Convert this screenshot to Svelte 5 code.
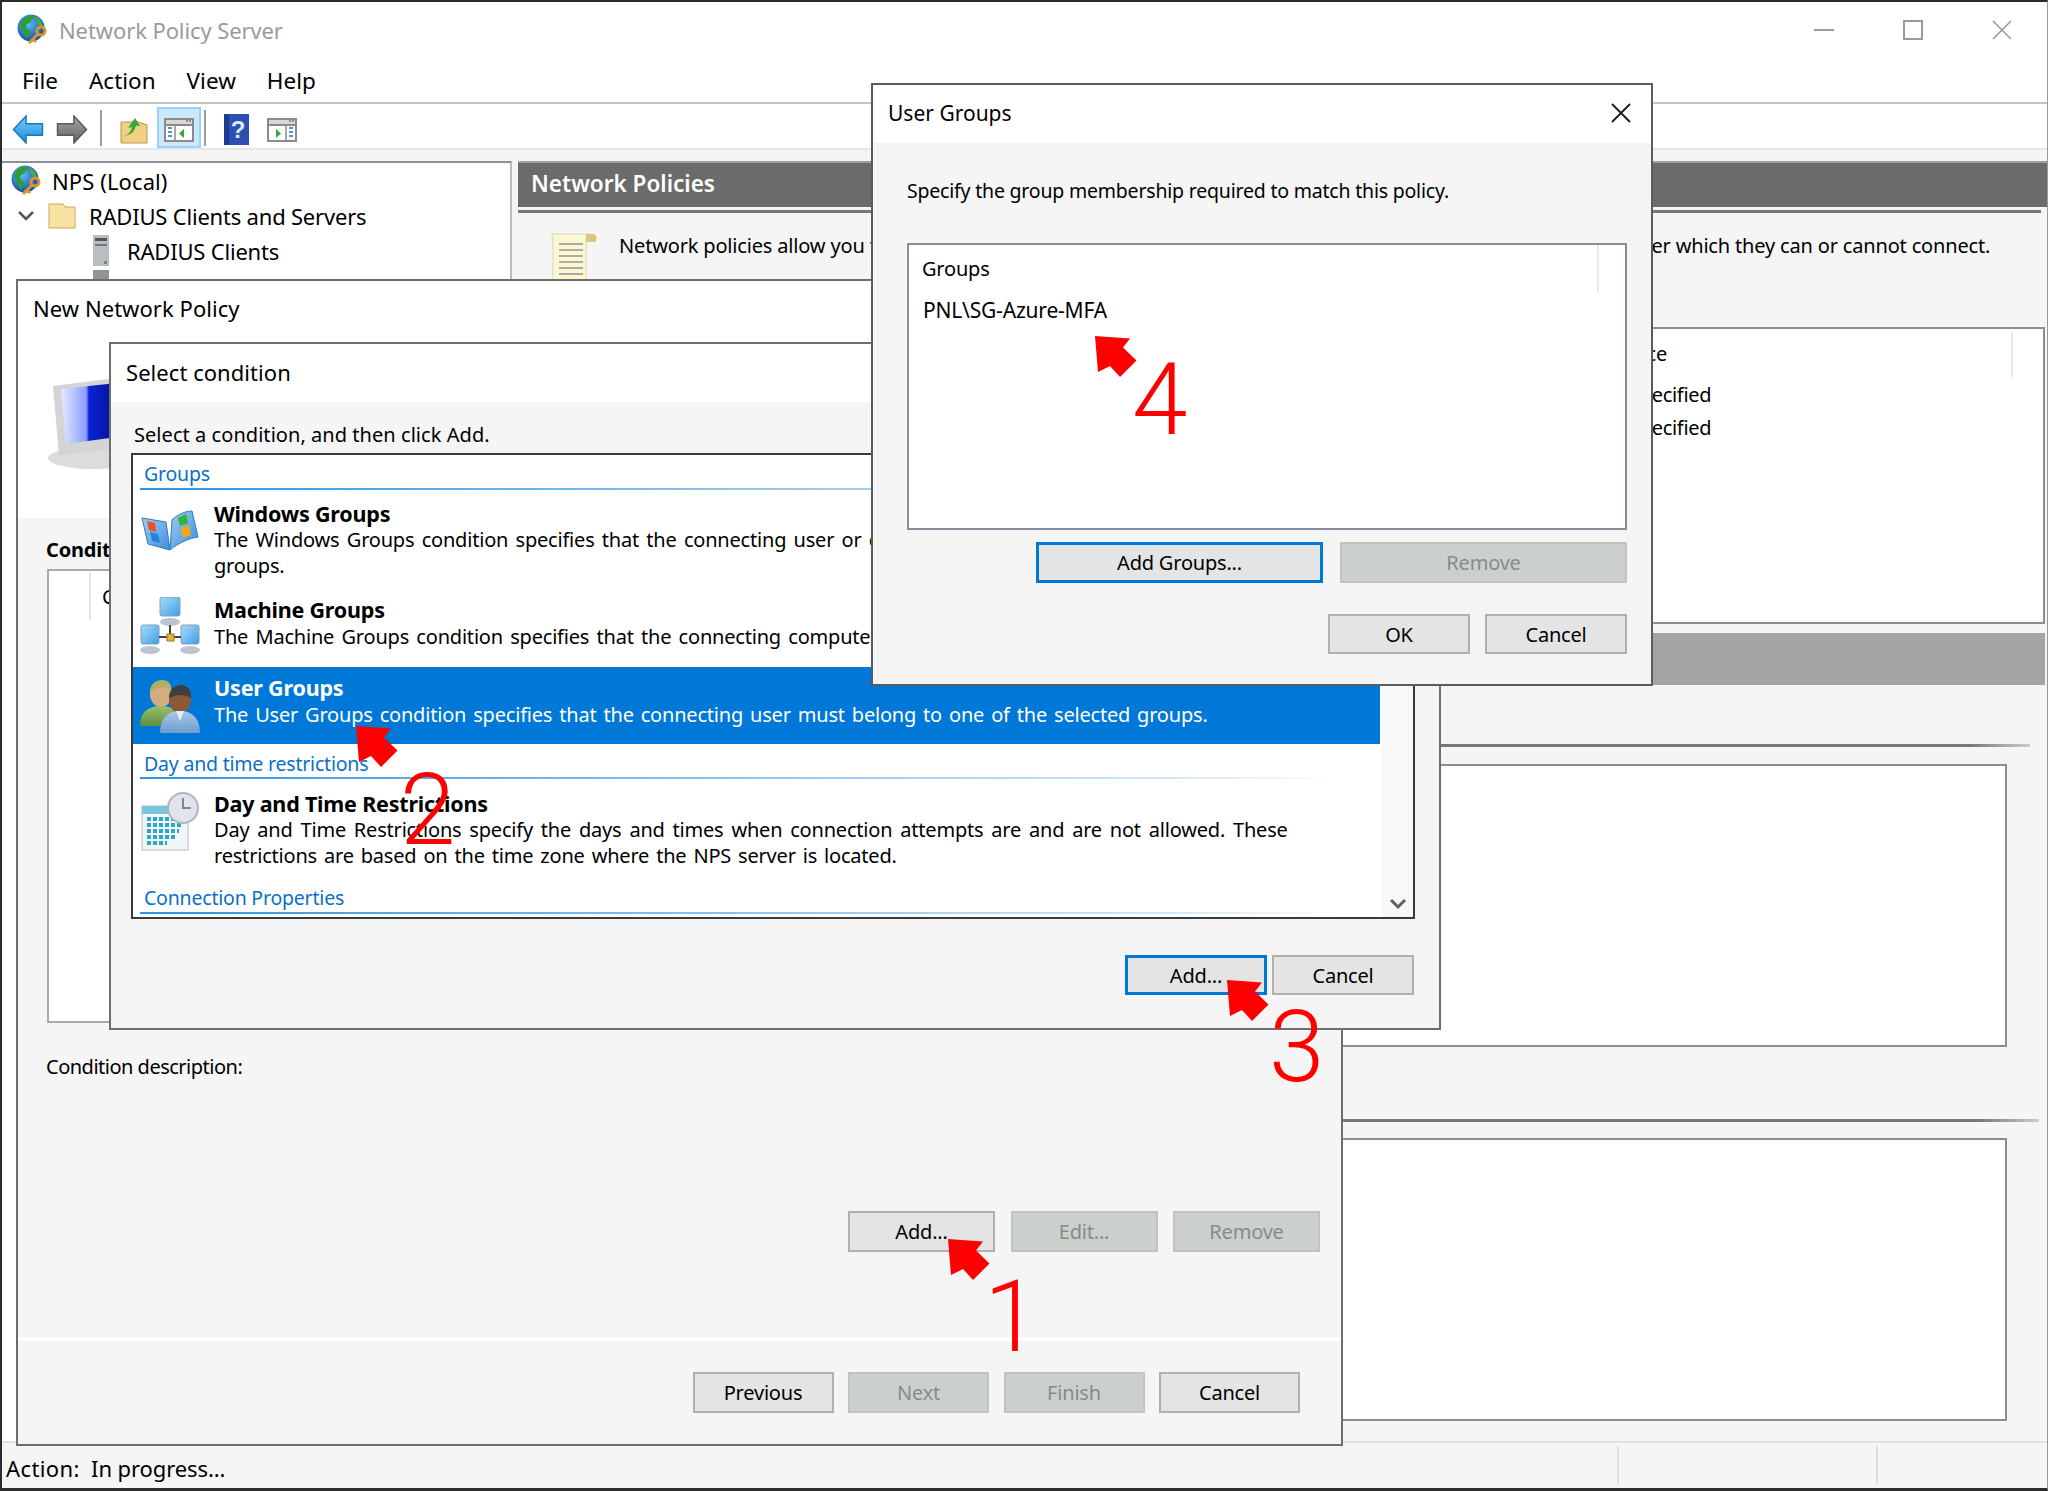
<script>
  const arrows = [
    { x: 948, y: 1239 },
    { x: 356, y: 726 },
    { x: 1227, y: 980 },
    { x: 1095, y: 336 }
  ];
  const digits = [
    { cls: 'd1', t: '1' },
    { cls: 'd2', t: '2' },
    { cls: 'd3', t: '3' },
    { cls: 'd4', t: '4' }
  ];
</script>

{#snippet globe()}
  <svg class="globe" viewBox="0 0 32 32">
    <circle cx="14" cy="14" r="13.500" fill="url(#gb)"/>
    <path d="M5 6c3-4 9-5 12-4 1 2-2 3-3 5-1 3-5 2-5 5 0 3 3 4 5 6-1 3-3 6-5 6-2-3-2-6-4-8-2-3-2-7 0-10z" fill="#2f9e36"/>
    <path d="M19 3c3 1 6 4 7 9-2 1-4 0-5-2s-3-5-2-7z" fill="#45ad42"/>
    <g fill="none" stroke="#d8962a" stroke-width="3">
      <circle cx="24" cy="17" r="4"/>
      <path d="M21 20l-9 9M16 25l3 3"/>
    </g>
  </svg>
{/snippet}

{#snippet miniwin(dir)}
  <svg class="miniwin" viewBox="0 0 30 24">
    <rect x="1" y="1" width="28" height="22" fill="#fff" stroke="#8b8b8b" stroke-width="2"/>
    <rect x="2" y="2" width="26" height="4" fill="#d9d9d9"/>
    <path d="M22 3h2M25 3h2" stroke="#777" stroke-width="1.500"/>
    <path d="M1 7h28" stroke="#8b8b8b" stroke-width="2"/>
    {#if dir === 'l'}
      <path d="M11 7v16" stroke="#8b8b8b" stroke-width="1.500"/>
      <path d="M4 10h4M4 14h4M4 18h4" stroke="#5a8fc8" stroke-width="2"/>
      <path d="M20 11v9l-5-4.500z" fill="#35a835"/>
    {:else}
      <path d="M19 7v16" stroke="#8b8b8b" stroke-width="1.500"/>
      <path d="M22 10h4M22 14h4M22 18h4" stroke="#5a8fc8" stroke-width="2"/>
      <path d="M9 11v9l5-4.500z" fill="#35a835"/>
    {/if}
  </svg>
{/snippet}

<div class="root">
  <svg class="defs" width="0" height="0" aria-hidden="true">
    <defs>
      <radialGradient id="gb" cx="0.4" cy="0.35" r="0.7"><stop offset="0" stop-color="#5fbcf0"/><stop offset="1" stop-color="#0d46a8"/></radialGradient>
      <linearGradient id="gback" x1="0" y1="0" x2="0" y2="1"><stop offset="0" stop-color="#7cd0f7"/><stop offset="1" stop-color="#1587dd"/></linearGradient>
      <linearGradient id="gfwd" x1="0" y1="0" x2="0" y2="1"><stop offset="0" stop-color="#a8a8a8"/><stop offset="1" stop-color="#5e5e5e"/></linearGradient>
      <linearGradient id="scr" x1="0" x2="1"><stop offset="0" stop-color="#e4eaff"/><stop offset="0.45" stop-color="#8b9dff"/><stop offset="0.5" stop-color="#0b22d8"/><stop offset="1" stop-color="#04108f"/></linearGradient>
      <linearGradient id="pagel" x1="0" y1="0" x2="1" y2="1"><stop offset="0" stop-color="#9ccdf2"/><stop offset="1" stop-color="#3f8fda"/></linearGradient>
      <linearGradient id="scrn" x1="0" y1="0" x2="1" y2="1"><stop offset="0" stop-color="#a6dcf9"/><stop offset="1" stop-color="#3f9fe8"/></linearGradient>
      <linearGradient id="shg" x1="0" y1="0" x2="0" y2="1"><stop offset="0" stop-color="#9cc06e"/><stop offset="1" stop-color="#5d8f42"/></linearGradient>
      <linearGradient id="shb" x1="0" y1="0" x2="0" y2="1"><stop offset="0" stop-color="#a9c8e8"/><stop offset="1" stop-color="#6d9ccc"/></linearGradient>
    </defs>
  </svg>

  <div class="win">
    <header class="titlebar">
      {@render globe()}
      <span class="apptitle">Network Policy Server</span>
      <div class="controls">
        <svg viewBox="0 0 20 20"><path d="M0 10h20" stroke="#9a9a9a" stroke-width="2"/></svg>
        <svg viewBox="0 0 20 20"><rect x="1" y="1" width="18" height="18" fill="none" stroke="#9a9a9a" stroke-width="2"/></svg>
        <svg viewBox="0 0 20 20"><path d="M1 1l18 18M19 1L1 19" stroke="#9a9a9a" stroke-width="1.600"/></svg>
      </div>
    </header>

    <nav class="menubar">
      <span>File</span><span>Action</span><span>View</span><span>Help</span>
    </nav>

    <div class="toolbar">
      <svg class="t-back" viewBox="0 0 32 30"><path d="M1 15L14 1v8h17v12H14v8z" fill="url(#gback)" stroke="#1b75c0" stroke-width="1.500"/></svg>
      <svg class="t-fwd" viewBox="0 0 32 30"><path d="M31 15L18 1v8H1v12h17v8z" fill="url(#gfwd)" stroke="#5a5a5a" stroke-width="1.500"/></svg>
      <i class="t-sep s1"></i>
      <svg class="t-up" viewBox="0 0 28 28"><path d="M1 27V6h17l9 3v18z" fill="#f0d184" stroke="#b8964a"/><path d="M4 20c4-1 7-4 8-9l-4 1 7-10 5 8-4-.5c-1 5-5 10-12 10.500z" fill="#35a835"/></svg>
      <div class="t-hl">{@render miniwin('l')}</div>
      <i class="t-sep s2"></i>
      <svg class="t-help" viewBox="0 0 25 31"><rect width="25" height="31" fill="#2d4fb0"/><rect x="0" width="5" height="31" fill="#1e3a8c"/><text x="14" y="24" class="qm">?</text></svg>
      <div class="t-win2">{@render miniwin('r')}</div>
    </div>

    <main class="content">
      <aside class="tree">
        <div class="node n0">{@render globe()}<span>NPS (Local)</span></div>
        <div class="node n1">
          <svg class="chev" viewBox="0 0 16 10"><path d="M1 1l7 7 7-7" fill="none" stroke="#555" stroke-width="2.500"/></svg>
          <svg class="folder" viewBox="0 0 28 27"><path d="M1 26V2h14l2 3h10v21z" fill="#f8e3a3" stroke="#c7a95a"/></svg>
          <span>RADIUS Clients and Servers</span>
        </div>
        <div class="node n2">
          <svg class="server" viewBox="0 0 16 31"><rect width="16" height="31" fill="#b9bec2"/><rect x="2" y="3" width="12" height="3" fill="#555"/><rect x="2" y="9" width="12" height="2" fill="#777"/><rect x="11" y="26" width="3" height="3" fill="#4caf3f"/></svg>
          <span>RADIUS Clients</span>
        </div>
        <div class="node n3">
          <svg class="server" viewBox="0 0 16 31"><rect width="16" height="31" fill="#8f9599"/></svg>
          <span>Remote RADIUS Server Groups</span>
        </div>
      </aside>

      <section class="pane">
        <h2 class="panehead">Network Policies</h2>
        <div class="panerule"></div>
        <div class="info">
          <svg class="scroll" viewBox="0 0 50 50">
            <path d="M3 2h38c-3 2-3 4-3 8v40H5V8C5 5 4 3 3 2z" fill="#fdf8cf" stroke="#d9d6b8"/>
            <path d="M38 2h8c3 1 3 6 1 8h-9z" fill="#d9c77a"/>
            <path d="M11 12h24M11 18h24M11 24h24M11 30h24M11 36h24M11 42h24" stroke="#aaa" stroke-width="2"/>
          </svg>
          <p>Network policies allow you to designate who is authorized to connect to the network and the circumstances under which they can or cannot connect.</p>
        </div>
        <div class="table">
          <div class="src">
            <div class="srchead">Source</div>
            <div class="srcrow r1">Unspecified</div>
            <div class="srcrow">Unspecified</div>
          </div>
        </div>
        <div class="band"></div>
        <div class="rule r-a"></div>
        <div class="box b1"></div>
        <div class="rule r-b"></div>
        <div class="box b2"></div>
      </section>
    </main>

    <footer class="status">
      <span class="st-main"><span class="st-act">Action:</span>&nbsp; In progress...</span>
      <i></i><i class="st2"></i>
    </footer>
  </div>

  <!-- New Network Policy -->
  <div class="dlg nnp">
    <div class="nnp-head">
      <div class="dtitle big">New Network Policy</div>
      <svg class="monitor" viewBox="0 0 70 92">
        <ellipse cx="45" cy="80" rx="44" ry="11" fill="#dcdcdc"/>
        <path d="M6 8l64-8v70l-58 8z" fill="#d4d4d4"/>
        <path d="M14 11l56-6v54l-51 7z" fill="url(#scr)"/>
      </svg>
    </div>
    <div class="nnp-body">
      <div class="condlabel">Conditions:</div>
      <div class="condbox"><div class="condhead">Condition</div></div>
      <div class="conddesc">Condition description:</div>
      <div class="btnrow row-a">
        <button class="btn w147">Add...</button>
        <button class="btn w147 off">Edit...</button>
        <button class="btn w147 off">Remove</button>
      </div>
      <div class="whitesep"></div>
      <div class="btnrow row-b">
        <button class="btn w141">Previous</button>
        <button class="btn w141 off">Next</button>
        <button class="btn w141 off">Finish</button>
        <button class="btn w141">Cancel</button>
      </div>
    </div>
  </div>

  <!-- Select condition -->
  <div class="dlg sel">
    <div class="dhead"><span class="dtitle big sel-t">Select condition</span></div>
    <div class="sel-body">
      <div class="sel-label">Select a condition, and then click Add.</div>
      <div class="list">
        <div class="items">
          <div class="sect">Groups</div>
          <div class="item h97">
            <svg class="ic ic-win" viewBox="0 0 60 42">
              <path d="M2 8l24 4 4 28L8 34z" fill="url(#pagel)" stroke="#2f78c4"/>
              <path d="M30 40l2-30c6-6 14-9 20-9l6 26c-8 1-20 6-28 13z" fill="url(#pagel)" stroke="#2f78c4"/>
              <path d="M7 11l8 2 1 9-7-2z" fill="#f0501e"/><path d="M10 22l8 2 2 9-8-2z" fill="#1f86e0"/>
              <path d="M38 8l8-4 2 9-8 3z" fill="#33b533"/><path d="M41 18l8-3 2 10-8 3z" fill="#f2a71b"/>
            </svg>
            <div class="txt">
              <div class="ttl">Windows Groups</div>
              <div class="dsc">The Windows Groups condition specifies that the connecting user or computer must belong to one of the selected<br/>groups.</div>
            </div>
          </div>
          <div class="item h80">
            <svg class="ic ic-mac" viewBox="0 0 60 59">
              <rect x="20" y="0" width="20" height="19" rx="2" fill="url(#scrn)" stroke="#8d9bb0"/><ellipse cx="30" cy="25" rx="10" ry="4" fill="#bcc4d2"/>
              <rect x="1" y="28" width="18" height="19" rx="2" fill="url(#scrn)" stroke="#8d9bb0"/><ellipse cx="10" cy="53" rx="10" ry="4" fill="#bcc4d2"/>
              <rect x="41" y="28" width="18" height="19" rx="2" fill="url(#scrn)" stroke="#8d9bb0"/><ellipse cx="50" cy="53" rx="10" ry="4" fill="#bcc4d2"/>
              <path d="M30 28v12M19 40h22" stroke="#444" stroke-width="2"/>
              <rect x="27" y="37" width="7" height="7" fill="#e4b23a" stroke="#9a7a1a"/>
            </svg>
            <div class="txt">
              <div class="ttl t28">Machine Groups</div>
              <div class="dsc">The Machine Groups condition specifies that the connecting computer must belong to one of the selected groups.</div>
            </div>
          </div>
          <div class="item h77 selected">
            <svg class="ic ic-usr" viewBox="0 0 60 53">
              <ellipse cx="21" cy="14" rx="11" ry="13" fill="#d3ac80"/>
              <path d="M10 12c0-8 6-12 12-12 6 0 10 4 9 9-7-3-14-1-21 3z" fill="#b5ad62"/>
              <path d="M0 46c0-14 8-20 21-20s20 6 20 20z" fill="url(#shg)"/>
              <ellipse cx="40" cy="20" rx="11" ry="13" fill="#8a5a38"/>
              <path d="M29 18c0-9 6-13 12-13s11 5 10 13c-6-4-14-4-22 0z" fill="#3f3f40"/>
              <path d="M20 53c0-15 8-22 20-22s20 7 20 22z" fill="url(#shb)"/>
              <path d="M36 31l4 10 4-10z" fill="#e6eef6"/>
            </svg>
            <div class="txt">
              <div class="ttl t28">User Groups</div>
              <div class="dsc tight">The User Groups condition specifies that the connecting user must belong to one of the selected groups.</div>
            </div>
          </div>
          <div class="sect s-day">Day and time restrictions</div>
          <div class="item h99">
            <svg class="ic ic-cal" viewBox="0 0 58 59">
              <rect x="1" y="14" width="46" height="44" fill="#f2f6f8" stroke="#b5babd"/>
              <rect x="1" y="14" width="46" height="8" fill="#7cc6da"/>
              <path d="M6 27h36M6 33h36M6 39h32M6 45h28M6 51h20" stroke="#29a9cc" stroke-width="4" stroke-dasharray="4 2"/>
              <circle cx="42" cy="16" r="15" fill="#dfe5ea" stroke="#aeb6bd" stroke-width="2"/>
              <path d="M42 6v10h8" fill="none" stroke="#7b8691" stroke-width="2"/>
            </svg>
            <div class="txt">
              <div class="ttl">Day and Time Restrictions</div>
              <div class="dsc"><span class="wide">Day and Time Restrictions specify the days and times when connection attempts are and are not allowed. These</span><br/><span class="tight">restrictions are based on the time zone where the NPS server is located.</span></div>
            </div>
          </div>
          <div class="sect">Connection Properties</div>
        </div>
        <div class="scrollbar">
          <svg viewBox="0 0 16 12"><path d="M1 1l7 7 7-7" fill="none" stroke="#606060" stroke-width="3"/></svg>
        </div>
      </div>
      <div class="btnrow row-c">
        <button class="btn w142 focus">Add...</button>
        <button class="btn w142">Cancel</button>
      </div>
    </div>
  </div>

  <!-- User Groups -->
  <div class="dlg ug">
    <div class="dhead spread">
      <span class="dtitle">User Groups</span>
      <svg class="closex" viewBox="0 0 20 20"><path d="M1 1l18 18M19 1L1 19" stroke="#1a1a1a" stroke-width="1.800"/></svg>
    </div>
    <div class="ug-body">
      <div class="ug-text">Specify the group membership required to match this policy.</div>
      <div class="ug-list">
        <div class="ug-hd"><span>Groups</span></div>
        <div class="ug-row">PNL\SG-Azure-MFA</div>
      </div>
      <div class="btnrow row-d">
        <button class="btn w287 focus">Add Groups...</button>
        <button class="btn w287 off">Remove</button>
      </div>
      <div class="btnrow row-e">
        <button class="btn w142">OK</button>
        <button class="btn w142">Cancel</button>
      </div>
    </div>
  </div>

  {#each arrows as a}
    <svg class="arrow" style="left:{a.x}px;top:{a.y}px" viewBox="0 0 42 42">
      <path d="M0 0L35 2.500 28 11.500 41.500 24.600 25 41 15 30 3 36z" fill="#fe0000"/>
    </svg>
  {/each}
  {#each digits as d}
    <span class="digit {d.cls}">{d.t}</span>
  {/each}
</div>

<style>
  :global(body) { margin: 0; background: #fff; }
  .defs { position: absolute; }
  .root {
    position: relative; width: 2048px; height: 1491px; overflow: hidden;
    font-family: "Noto Sans", "Open Sans", sans-serif; font-size: 20px; color: #000;
    letter-spacing: -0.2px;
  }
  .win {
    width: 2048px; height: 1491px; box-sizing: border-box;
    display: flex; flex-direction: column; background: #fff;
    border-top: 2px solid #2c2c2c; border-left: 2px solid #2c2c2c; border-bottom: 3px solid #2c2c2c; border-right: 1px solid #9a9a9a;
  }
  .titlebar { height: 56px; display: flex; align-items: center; padding-left: 15px; flex: none; }
  .globe { width: 32px; height: 32px; flex: none; }
  .apptitle { margin-left: 10px; color: #9b9b9b; font-size: 22px; letter-spacing: -0.1px; }
  .controls { margin-left: auto; padding-right: 35px; display: flex; gap: 69px; }
  .controls svg { width: 20px; height: 20px; display: block; }
  .menubar {
    height: 44px; border-bottom: 2px solid #c4c6c6; flex: none;
    display: flex; align-items: center; padding-left: 20px; gap: 31px; font-size: 22.500px; letter-spacing: 0;
  }
  .toolbar {
    height: 46px; box-sizing: border-box; padding-top: 3px; border-bottom: 2px solid #e6e6e6; flex: none;
    display: flex; align-items: center; padding-left: 10px;
  }
  .toolbar svg { flex: none; display: block; }
  .t-back, .t-fwd { width: 32px; height: 29px; margin-top: 4px; }
  .t-fwd { margin-left: 12px; }
  .t-sep { width: 2px; height: 36px; background: #9d9d9d; flex: none; }
  .s1 { margin-left: 12px; }
  .t-up { width: 28px; height: 28px; margin: 4px 0 0 18px; }
  .t-hl {
    width: 44px; height: 41px; box-sizing: border-box; margin-left: 9px;
    background: #cce8ff; border: 2px solid #99d1ff;
    display: flex; align-items: center; justify-content: center; padding-top: 5px;
  }
  .miniwin { width: 30px; height: 24px; display: block; }
  .s2 { margin-left: 3px; }
  .t-help { width: 25px; height: 31px; margin: 3px 0 0 18px; }
  .qm { fill: #dfe6ff; font: bold 24px "Liberation Sans", sans-serif; text-anchor: middle; }
  .t-win2 { margin: 5px 0 0 18px; }

  .content { flex: 1; min-height: 0; background: #f5f5f5; display: flex; padding-top: 11px; gap: 6px; border-bottom: 2px solid #e2e2e2; }
  .tree { width: 510px; flex: none; box-sizing: border-box; background: #fff; border-top: 2px solid #8c909e; border-right: 2px solid #b9bcc4; font-size: 22px; letter-spacing: -0.2px; }
  .node { display: flex; align-items: center; height: 35px; }
  .n0 { padding-left: 9px; height: 35px; }
  .n0 span { margin-left: 9px; letter-spacing: 0.1px; }
  .chev { width: 16px; height: 10px; margin-left: 16px; }
  .folder { width: 28px; height: 27px; margin-left: 14px; }
  .n1 span { margin-left: 13px; }
  .server { width: 16px; height: 31px; margin-left: 91px; }
  .n2 span, .n3 span { margin-left: 18px; }

  .pane { flex: 1; min-width: 0; display: flex; flex-direction: column; }
  .panehead {
    height: 46px; box-sizing: border-box; margin: 0; flex: none; background: #6b6b6b; color: #fff;
    border-top: 2px solid #a0a0a0; font-size: 22.500px; font-weight: 600; padding-left: 13px; line-height: 42px; letter-spacing: 0;
  }
  .panerule { height: 3px; margin-top: 3px; background: #777; flex: none; margin-right: 6px; }
  .info { height: 114px; flex: none; display: flex; align-items: flex-start; padding: 19px 0 0 30px; box-sizing: border-box; }
  .scroll { width: 50px; height: 50px; flex: none; }
  .info p { margin: 1px 0 0 21px; white-space: nowrap; line-height: 26px; letter-spacing: -0.17px; }
  .table {
    height: 297px; box-sizing: border-box; flex: none; margin-left: 13px; margin-right: 2px;
    background: #fff; border: 2px solid #8a8e9c; display: flex; justify-content: flex-end;
  }
  .src { width: 439px; }
  .srchead { width: 409px; height: 45px; line-height: 43px; box-sizing: border-box; border-right: 2px solid #e8e8e8; margin-top: 3px; }
  .srcrow { height: 33px; line-height: 33px; letter-spacing: -0.3px; }
  .r1 { margin-top: 1px; }
  .band { height: 52px; margin-top: 9px; margin-right: 2px; background: #a4a4a4; flex: none; }
  .rule { height: 3px; background: linear-gradient(90deg, #777 96%, #ccc); flex: none; }
  .r-a { margin-top: 59px; margin-right: 17px; }
  .r-b { margin-top: 72px; margin-right: 8px; }
  .box { background: #fff; border: 2px solid #8a8e9c; box-sizing: border-box; margin-left: 13px; margin-right: 40px; flex: none; }
  .b1 { margin-top: 17px; height: 283px; }
  .b2 { margin-top: 16px; height: 283px; }

  .status { height: 45px; flex: none; background: #f5f5f5; display: flex; align-items: center; }
  .st-main { padding-left: 4px; width: 1615px; font-size: 22px; letter-spacing: -0.1px; padding-top: 4px; flex: none; box-sizing: border-box; }
  .st-act { letter-spacing: 0.4px; }
  .status i { display: block; width: 2px; height: 39px; background: #dedede; flex: none; }
  .st2 { margin-left: 257px; }

  .dlg { position: absolute; box-sizing: border-box; border: 2px solid #6e6e6e; background: #f5f5f5; display: flex; flex-direction: column; }
  .dtitle { font-size: 21px; letter-spacing: 0; line-height: 1; }
  .dtitle.big { font-size: 22px; margin-top: -2px; margin-left: -1px; letter-spacing: 0.05px; }
  .dtitle.sel-t { margin-left: 0; margin-top: -3px; }
  .dhead { height: 58px; background: #fff; display: flex; align-items: center; padding-left: 15px; flex: none; }

  .nnp { left: 16px; top: 279px; width: 1327px; height: 1167px; }
  .nnp-head { height: 237px; background: #fff; flex: none; padding: 18px 0 0 16px; box-sizing: border-box; display: flex; flex-direction: column; }
  .monitor { width: 70px; height: 92px; margin: 59px 0 0 13px; }
  .nnp-body { padding: 0 21px 0 29px; display: flex; flex-direction: column; }
  .condlabel { margin: 18px 0 0 -1px; line-height: 28px; font-weight: 700; }
  .condbox { margin-top: 5px; height: 454px; background: #fff; border: 2px solid #a6a9b3; box-sizing: border-box; padding-left: 40px; flex: none; }
  .condhead { border-left: 2px solid #e5e5e5; height: 47px; line-height: 48px; padding-left: 11px; margin-top: 2px; }
  .conddesc { margin: 30px 0 0 -1px; line-height: 28px; letter-spacing: -0.5px; }
  .btnrow { display: flex; justify-content: flex-end; flex: none; }
  .row-a { margin-top: 130px; gap: 15.500px; }
  .whitesep { height: 4px; margin: 85px -21px 0 -29px; background: #fff; flex: none; }
  .row-b { margin-top: 31px; gap: 14.500px; padding-right: 20px; }
  .btn {
    height: 41px; box-sizing: border-box; margin: 0; padding: 0;
    background: #e4e4e4; border: 2px solid #b0b0b0; color: #000;
    font: inherit; letter-spacing: inherit; flex: none;
  }
  .btn.off { background: #ccd0cc; border-color: #c0c4c0; color: #8a8a8a; }
  .btn.focus { border: 3px solid #0078d7; }
  .w147 { width: 147px; } .w141 { width: 141px; } .w142 { width: 142px; } .w287 { width: 287px; }

  .sel { left: 109px; top: 342px; width: 1332px; height: 688px; }
  .sel-body { padding: 0 24px 0 20px; display: flex; flex-direction: column; }
  .sel-label { margin-top: 19px; line-height: 28px; padding-left: 3px; letter-spacing: 0.05px; }
  .list { margin-top: 4px; height: 466px; box-sizing: border-box; border: 2px solid #3a3a3a; background: #fff; display: flex; flex: none; }
  .items { width: 1247px; flex: none; }
  .sect {
    position: relative; color: #0a6fc8; line-height: 28px; padding: 5px 0 0 11px; height: 35px; box-sizing: border-box; font-size: 19.500px;
  }
  .sect::after {
    content: ''; position: absolute; left: 7px; right: 40px; bottom: 0; height: 2px;
    background: linear-gradient(90deg, #2f94e4, #cfe6f8 85%, #fff);
  }
  .s-day { padding-top: 6px; }
  .item { display: flex; box-sizing: border-box; padding-left: 7px; }
  .h97 { height: 97px; padding-top: 10px; }
  .h80 { height: 80px; padding-top: 9px; }
  .h77 { height: 77px; padding-top: 7px; }
  .h99 { height: 100px; padding-top: 11px; }
  .selected { background: #0078d7; color: #fff; }
  .ic { width: 60px; flex: none; display: block; }
  .ic-win { height: 42px; margin-top: 10px; }
  .ic-mac { height: 59px; margin-top: 1px; }
  .ic-usr { height: 53px; margin-top: 6px; }
  .ic-cal { height: 59px; margin-top: 2px; width: 60px; }
  .txt { margin-left: 14px; white-space: nowrap; flex: none; }
  .ttl { font-weight: 700; line-height: 27px; font-size: 21.500px; letter-spacing: -0.2px; }
  .t28 { line-height: 28px; }
  .dsc { line-height: 26px; word-spacing: 2.300px; }
  .tight { word-spacing: 2px; }
  .wide { word-spacing: 2.900px; }
  .scrollbar { flex: 1; margin-left: 2px; background: #f8f8f8; display: flex; align-items: flex-end; justify-content: center; padding-bottom: 6px; }
  .scrollbar svg { width: 16px; height: 12px; display: block; }
  .row-c { margin-top: 36px; gap: 5px; padding-right: 1px; }
  .row-c .btn { height: 40px; }

  .ug { left: 871px; top: 83px; width: 782px; height: 603px; border-color: #5c5c5c; }
  .spread { justify-content: space-between; padding-right: 20px; padding-bottom: 2px; box-sizing: border-box; }
  .closex { width: 20px; height: 20px; }
  .ug-body { padding: 0 24px 0 34px; display: flex; flex-direction: column; }
  .ug-text { margin-top: 34px; line-height: 28px; white-space: nowrap; font-size: 19.500px; }
  .ug-list { margin-top: 38px; height: 287px; box-sizing: border-box; border: 2px solid #8a8e9c; background: #fff; padding-left: 13px; flex: none; }
  .ug-hd { height: 47px; margin-right: 26px; border-right: 2px solid #e8e8e8; line-height: 48px; }
  .ug-row { line-height: 30px; margin-top: 3px; font-size: 21px; padding-left: 1px; }
  .row-d { margin-top: 12px; gap: 17px; }
  .row-e { margin-top: 31px; gap: 15px; }
  .row-e .btn { height: 40px; }

  .arrow { position: absolute; width: 42px; height: 42px; }
  .digit {
    position: absolute; color: #fe0000; font-family: Roboto, "Liberation Sans", sans-serif; font-weight: 300;
    font-size: 100px; line-height: 100px; letter-spacing: 0;
  }
  .d1 { left: 984px; top: 1267px; }
  .d2 { left: 400px; top: 760px; }
  .d3 { left: 1269px; top: 997px; }
  .d4 { left: 1132px; top: 350px; }
</style>
